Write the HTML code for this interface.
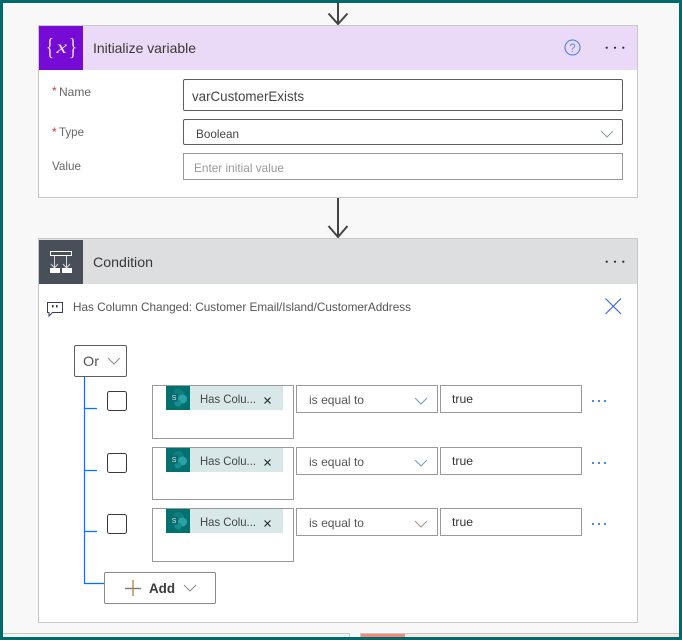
<!DOCTYPE html>
<html><head><meta charset="utf-8"><style>
html,body{margin:0;padding:0;background:#f8f8f8;width:682px;height:640px;overflow:hidden}
svg{display:block}
text{font-family:"Liberation Sans",sans-serif;font-size:12px;fill:#444;white-space:pre}
.b{fill:#fff;stroke:#999;stroke-width:1}
.d{fill:#fff;stroke:#605e5c;stroke-width:1}
</style></head><body>
<svg width="682" height="640" viewBox="0 0 682 640" xmlns="http://www.w3.org/2000/svg">
<defs>
<g id="sp"><rect width="24" height="24" fill="#00716f"/><circle cx="12.5" cy="8.5" r="5.5" fill="#117f80"/><circle cx="16.5" cy="13" r="4.5" fill="#2aa3a6"/><circle cx="12" cy="17" r="3.5" fill="#178e90"/><rect x="4.5" y="7.5" width="7.5" height="8" fill="#0a6a6c"/><text x="5.8" y="14" style="font-size:7px;fill:#cfe8e8">S</text></g>
<path id="chev" d="M0 0L6 6L12 0" fill="none" stroke-width="1"/>
</defs>

<!-- arrows -->
<path d="M338 3V24M328.5 13.5L338 24L347.5 13.5" fill="none" stroke="#444" stroke-width="2"/>
<path d="M338 198V237M328.5 226L338 237L347.5 226" fill="none" stroke="#444" stroke-width="2"/>

<!-- card 1 -->
<rect x="38.5" y="25.5" width="599" height="172" fill="#fff" stroke="#c8c8c8"/>
<rect x="39" y="26" width="598" height="44" fill="#ead9f7"/>
<rect x="39" y="26" width="44" height="44" fill="#770bd6"/>
<text x="46" y="55" textLength="8" lengthAdjust="spacingAndGlyphs" style="font-size:24px;fill:#f4ecfb;font-family:'Liberation Serif',serif">{</text>
<text x="56.5" y="53" textLength="10.5" lengthAdjust="spacingAndGlyphs" style="font-size:18px;fill:#efe4fa;font-style:italic;font-family:'Liberation Serif',serif">x</text>
<text x="69" y="55" textLength="8" lengthAdjust="spacingAndGlyphs" style="font-size:24px;fill:#f4ecfb;font-family:'Liberation Serif',serif">}</text>
<text x="93" y="53" textLength="103" lengthAdjust="spacingAndGlyphs" style="font-size:14px;fill:#3a3835">Initialize variable</text>
<circle cx="572.5" cy="47.5" r="7.5" fill="none" stroke="#3a78f5" stroke-width="1"/>
<text x="569.5" y="52" textLength="6" lengthAdjust="spacingAndGlyphs" style="font-size:12px;fill:#5a8df5">?</text>
<g fill="#2a2a4a"><circle cx="606.7" cy="47.7" r="1.1"/><circle cx="615" cy="47.7" r="1.1"/><circle cx="623.3" cy="47.7" r="1.1"/></g>

<text x="52" y="95" style="font-size:12px;fill:#d13438">*</text>
<text x="59" y="96" textLength="32" lengthAdjust="spacingAndGlyphs" style="fill:#666">Name</text>
<text x="52" y="136" style="font-size:12px;fill:#d13438">*</text>
<text x="59" y="136" textLength="25" lengthAdjust="spacingAndGlyphs" style="fill:#666">Type</text>
<text x="52" y="170" textLength="29" lengthAdjust="spacingAndGlyphs" style="fill:#666">Value</text>

<rect x="183.5" y="79.5" width="439" height="31" rx="1.5" class="d"/>
<text x="192" y="101" textLength="112" lengthAdjust="spacingAndGlyphs" style="font-size:14px;fill:#444">varCustomerExists</text>
<rect x="183.5" y="119.5" width="439" height="25" rx="1.5" class="d"/>
<text x="196" y="138" textLength="43" lengthAdjust="spacingAndGlyphs" style="fill:#444">Boolean</text>
<use href="#chev" x="601" y="131" stroke="#8a9aa8"/>
<rect x="183.5" y="153.5" width="439" height="26" class="b"/>
<text x="194" y="172" textLength="90" lengthAdjust="spacingAndGlyphs" style="fill:#999">Enter initial value</text>

<!-- card 2 -->
<rect x="38.5" y="238.5" width="599" height="384" fill="#fff" stroke="#c8c8c8"/>
<rect x="39" y="239" width="598" height="45" fill="#dcdee0"/>
<rect x="39" y="240" width="44" height="44" fill="#484f58"/>
<rect x="50.5" y="251.5" width="21" height="4" fill="none" stroke="#fff"/>
<path d="M54.5 256V268M51 264L54.5 268L58 264M66.5 256V268M63 264L66.5 268L70 264" fill="none" stroke="#d8dadc" stroke-width="1"/>
<rect x="50" y="268" width="10" height="5" fill="#fff"/>
<rect x="62" y="268" width="10" height="5" fill="#fff"/>
<text x="93" y="267" textLength="60" lengthAdjust="spacingAndGlyphs" style="font-size:14px;fill:#3a3835">Condition</text>
<g fill="#2a2a3a"><circle cx="606.7" cy="261.7" r="1.1"/><circle cx="615" cy="261.7" r="1.1"/><circle cx="623.3" cy="261.7" r="1.1"/></g>

<path d="M47.5 302.5H62.5V312.5H52.5L49 316V312.5H47.5Z" fill="none" stroke="#3a3a5a" stroke-width="1"/>
<rect x="52" y="305" width="1.6" height="2.5" fill="#3a3a3a"/><rect x="56" y="305" width="1.6" height="2.5" fill="#3a3a3a"/>
<text x="73" y="311" textLength="338" lengthAdjust="spacingAndGlyphs" style="fill:#555">Has Column Changed: Customer Email/Island/CustomerAddress</text>
<path d="M605.5 298.5L621 314M621 298.5L605.5 314" stroke="#3a5fef" stroke-width="1.1" fill="none"/>

<!-- tree lines -->
<path d="M84.5 377V583.5H104M85 408.5H97M85 470.5H97M85 531.5H97" fill="none" stroke="#0072ff" stroke-width="1.2"/>
<rect x="74.5" y="345.5" width="52" height="31" rx="1.5" fill="#fff" stroke="#605e5c"/>
<text x="83" y="366" textLength="16" lengthAdjust="spacingAndGlyphs" style="font-size:14px;fill:#555">Or</text>
<use href="#chev" x="108" y="358" stroke="#8a9098"/>

<!-- row 1 -->
<rect x="107.5" y="391.5" width="19" height="19" rx="2" fill="#fff" stroke="#3a3a3a"/>
<rect x="152.5" y="385.5" width="141" height="53" class="b"/>
<rect x="166" y="386" width="117" height="24" fill="#d8e8e8"/><use href="#sp" x="166" y="386"/>
<text x="200" y="403" textLength="56" lengthAdjust="spacingAndGlyphs" style="fill:#444">Has Colu...</text>
<path d="M264.5 397.5L270.5 403.5M270.5 397.5L264.5 403.5" stroke="#222" stroke-width="1.1" fill="none"/>
<rect x="296.5" y="385.5" width="141" height="27" class="b"/>
<text x="309" y="404" textLength="55" lengthAdjust="spacingAndGlyphs" style="fill:#555">is equal to</text>
<use href="#chev" x="415" y="398" stroke="#6f9ac4"/>
<rect x="440.5" y="385.5" width="141" height="27" class="b"/>
<text x="452" y="403" textLength="21" lengthAdjust="spacingAndGlyphs" style="fill:#333">true</text>
<g fill="#4a88f5"><rect x="592" y="400" width="2" height="2"/><rect x="598" y="400" width="2" height="2"/><rect x="604" y="400" width="2" height="2"/></g>

<!-- row 2 -->
<rect x="107.5" y="453.5" width="19" height="19" rx="2" fill="#fff" stroke="#3a3a3a"/>
<rect x="152.5" y="447.5" width="141" height="52" class="b"/>
<rect x="166" y="448" width="117" height="24" fill="#d8e8e8"/><use href="#sp" x="166" y="448"/>
<text x="200" y="465" textLength="56" lengthAdjust="spacingAndGlyphs" style="fill:#444">Has Colu...</text>
<path d="M264.5 459.5L270.5 465.5M270.5 459.5L264.5 465.5" stroke="#222" stroke-width="1.1" fill="none"/>
<rect x="296.5" y="447.5" width="141" height="27" class="b"/>
<text x="309" y="466" textLength="55" lengthAdjust="spacingAndGlyphs" style="fill:#555">is equal to</text>
<use href="#chev" x="415" y="460" stroke="#6f9ac4"/>
<rect x="440.5" y="447.5" width="141" height="27" class="b"/>
<text x="452" y="465" textLength="21" lengthAdjust="spacingAndGlyphs" style="fill:#333">true</text>
<g fill="#4a88f5"><rect x="592" y="462" width="2" height="2"/><rect x="598" y="462" width="2" height="2"/><rect x="604" y="462" width="2" height="2"/></g>

<!-- row 3 -->
<rect x="107.5" y="514.5" width="19" height="19" rx="2" fill="#fff" stroke="#3a3a3a"/>
<rect x="152.5" y="508.5" width="141" height="53" class="b"/>
<rect x="166" y="509" width="117" height="24" fill="#d8e8e8"/><use href="#sp" x="166" y="509"/>
<text x="200" y="526" textLength="56" lengthAdjust="spacingAndGlyphs" style="fill:#444">Has Colu...</text>
<path d="M264.5 520.5L270.5 526.5M270.5 520.5L264.5 526.5" stroke="#222" stroke-width="1.1" fill="none"/>
<rect x="296.5" y="508.5" width="141" height="27" class="b"/>
<text x="309" y="527" textLength="55" lengthAdjust="spacingAndGlyphs" style="fill:#555">is equal to</text>
<use href="#chev" x="415" y="521" stroke="#a8917e"/>
<rect x="440.5" y="508.5" width="141" height="27" class="b"/>
<text x="452" y="526" textLength="21" lengthAdjust="spacingAndGlyphs" style="fill:#333">true</text>
<g fill="#4a88f5"><rect x="592" y="523" width="2" height="2"/><rect x="598" y="523" width="2" height="2"/><rect x="604" y="523" width="2" height="2"/></g>

<!-- add -->
<rect x="104.5" y="572.5" width="111" height="31" rx="1.5" fill="#fff" stroke="#8a8a8a"/>
<path d="M125 588.5H141" stroke="#777" stroke-width="1.4"/>
<path d="M133 580V596" stroke="#b8864e" stroke-width="1.4"/>
<text x="149" y="593" textLength="26" lengthAdjust="spacingAndGlyphs" style="font-size:14px;font-weight:bold;fill:#3a3a3a">Add</text>
<use href="#chev" x="184" y="585" stroke="#8a8a8a"/>

<!-- bottom partial cards -->
<rect x="3" y="634" width="346" height="3" fill="#f0f7f0"/>
<path d="M3 633.5H349.5V637" fill="none" stroke="#c4c8c4"/>
<rect x="360" y="634" width="319" height="3" fill="#fbe6e4"/>
<path d="M360.5 637V633.5H679" fill="none" stroke="#c8c8c8"/>
<rect x="361" y="634" width="44" height="3" fill="#f9857d"/>

<!-- outer frame -->
<rect x="1.5" y="1.5" width="679" height="637" fill="none" stroke="#006a6a" stroke-width="3"/>
</svg>
</body></html>
